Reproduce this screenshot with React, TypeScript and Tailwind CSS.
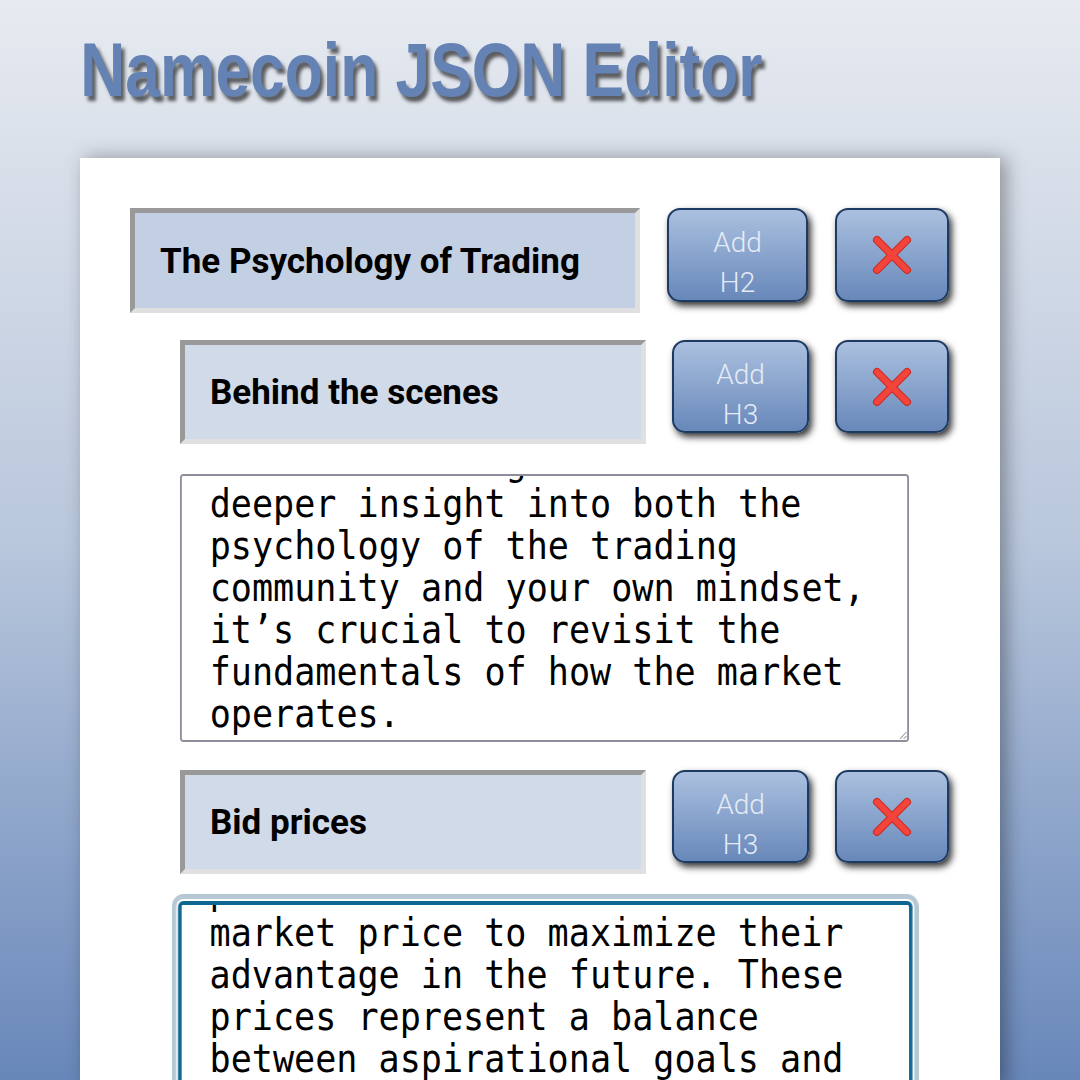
import { useEffect, useRef } from "react";

const introText =
  "Markets are driven by people, not just numbers.\nIf we want to gain a much deeper insight into both the psychology of the trading community and your own mindset, it’s crucial to revisit the fundamentals of how the market operates.";

const bidText =
  "Bid prices represent the highest amount a buyer is willing to pay for an asset. Many experienced traders often place bids below the current market price to maximize their advantage in the future. These prices represent a balance between aspirational goals and realistic expectations about where the market is heading next.";

function CloseIcon() {
  return (
    <svg width="40" height="40" viewBox="0 0 40 40" aria-hidden>
      <g strokeLinecap="round">
        <line x1="5" y1="5" x2="35" y2="35" stroke="#c92a20" strokeWidth="8" />
        <line x1="35" y1="5" x2="5" y2="35" stroke="#c92a20" strokeWidth="8" />
        <line x1="5" y1="5" x2="35" y2="35" stroke="#f2443a" strokeWidth="6" />
        <line x1="35" y1="5" x2="5" y2="35" stroke="#f2443a" strokeWidth="6" />
      </g>
    </svg>
  );
}

const btn =
  "flex shrink-0 flex-col items-center justify-center rounded-[13px] border-2 border-[#1d3a63] bg-gradient-to-b from-[#abc0df] to-[#6888ba] shadow-[3px_4px_7px_rgba(0,0,0,0.8)]";

function HeadingRow({
  text,
  level,
  first,
}: {
  text: string;
  level: number;
  first?: boolean;
}) {
  return (
    <div className={first ? "flex gap-[27px]" : "ml-[50px] flex gap-[26px]"}>
      <div
        className={`flex shrink-0 items-center border-[5px] border-t-[#999999] border-l-[#999999] border-r-[#e0e0e0] border-b-[#e0e0e0] pt-[3px] pl-[25px] font-['Roboto',sans-serif] text-[35px] font-bold text-black ${
          first ? "h-[105px] w-[510px] bg-[#c3d0e3]" : "h-[104px] w-[466px] bg-[#d1dae8]"
        }`}
      >
        {text}
      </div>
      <button
        className={`${btn} ${first ? "h-[94px] w-[141px]" : "h-[93px] w-[137px]"} pt-[16px] font-['Roboto',sans-serif] text-[28px] leading-[40px] font-light text-[#e4ebf6]`}
      >
        <span>Add</span>
        <span>H{level + 1}</span>
      </button>
      <button className={`${btn} ${first ? "h-[94px]" : "h-[93px]"} w-[114px]`}>
        <CloseIcon />
      </button>
    </div>
  );
}

// the mono text is set tall and narrow, so the whole field is squeezed to 90% width
function Body({
  value,
  scroll,
  focused,
}: {
  value: string;
  scroll: number;
  focused?: boolean;
}) {
  const ref = useRef<HTMLTextAreaElement>(null);
  useEffect(() => {
    if (ref.current) ref.current.scrollTop = scroll;
  }, [scroll]);
  return (
    <textarea
      ref={ref}
      readOnly
      value={value}
      className={`block origin-left scale-x-90 resize-y overflow-y-auto bg-white pt-0 pb-[12px] pl-[31px] font-['DejaVu_Sans_Mono',monospace] text-[39px] leading-[42px] text-black outline-none [scrollbar-width:none] ${
        focused
          ? "ml-[48px] h-[200px] w-[816px] rounded-[6px] border-4 border-[#0d6790] pr-[37px] shadow-[0_0_0_2px_#ffffff,0_0_0_7px_#b5c8d4]"
          : "ml-[50px] h-[268px] w-[810px] rounded-[4px] border-2 border-[#8d8d9b] pr-[35px]"
      }`}
    />
  );
}

export default function App() {
  return (
    <div className="min-h-[1080px] overflow-hidden bg-gradient-to-b from-[#e7eaf0] via-[#b9c7dc] to-[#6786b9]">
      <h1 className="origin-left scale-x-[0.82] pt-[32px] pl-[98px] font-['Liberation_Sans',sans-serif] text-[76px] leading-[76px] font-bold whitespace-nowrap text-[#6482b4] [text-shadow:4px_5px_4px_rgba(0,0,0,0.6)]">
        Namecoin JSON Editor
      </h1>
      <div className="mx-[80px] mt-[50px] h-[930px] bg-white pt-[50px] pl-[50px] shadow-[6px_0_18px_rgba(0,0,0,0.35)]">
        <HeadingRow text="The Psychology of Trading" level={1} first />
        <div className="mt-[27px]">
          <HeadingRow text="Behind the scenes" level={2} />
        </div>
        <div className="mt-[30px]">
          <Body value={introText} scroll={119} />
        </div>
        <div className="mt-[28px]">
          <HeadingRow text="Bid prices" level={2} />
        </div>
        <div className="mt-[27px]">
          <Body value={bidText} scroll={203} focused />
        </div>
      </div>
    </div>
  );
}
